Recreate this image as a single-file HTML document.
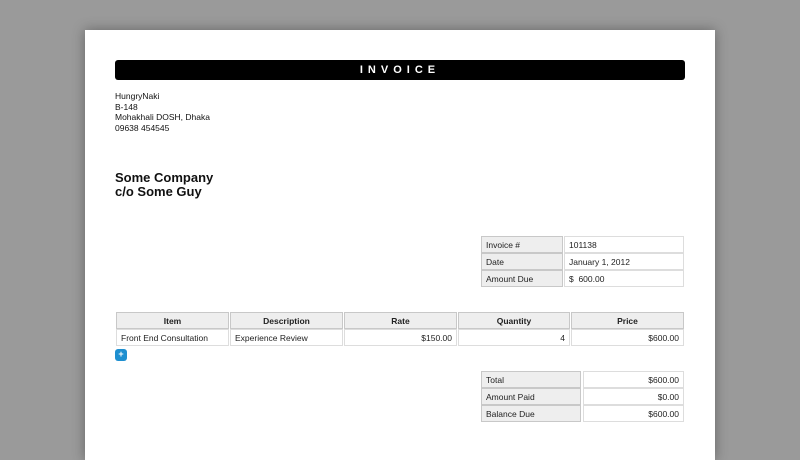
<!DOCTYPE html><html><head><style>
body{margin:0;width:800px;height:450px;background:#9a9a9a;overflow:hidden;font-family:"Liberation Sans",sans-serif;}
.page{position:absolute;left:85px;top:30px;width:630px;height:430px;background:#fff;box-shadow:0 0 12px rgba(0,0,0,.35);}
.bar{position:absolute;left:115px;top:60px;width:570px;height:20px;background:#000;border-radius:3px;color:#fff;font-weight:bold;font-size:11px;letter-spacing:5px;text-align:center;line-height:20px;}
.addr{position:absolute;left:115px;top:91px;font-size:8.5px;line-height:10.5px;color:#111;}
.co{position:absolute;left:115px;top:171px;font-size:13px;font-weight:bold;line-height:13.5px;color:#111;}
.c{position:absolute;box-sizing:border-box;border:1px solid #ddd;font-size:8.5px;padding:0 4px;color:#222;display:flex;align-items:center;}
.g{background:#eee;border-color:#c8c8c8;}
.h{background:#eee;border-color:#c8c8c8;font-weight:bold;justify-content:center;}
.r{justify-content:flex-end;}
.plus{position:absolute;left:115px;top:349px;width:12px;height:12px;border-radius:3px;background:#1e8fd0;color:#fff;font-size:9px;line-height:11px;text-align:center;font-weight:bold;}
</style></head><body>
<div class="page"></div>
<div class="bar">INVOICE</div>
<div class="addr">HungryNaki<br>B-148<br>Mohakhali DOSH, Dhaka<br>09638 454545</div>
<div class="co">Some Company<br>c/o Some Guy</div>

<div class="c g" style="left:481px;top:236px;width:82px;height:17px">Invoice #</div>
<div class="c" style="left:564px;top:236px;width:120px;height:17px">101138</div>
<div class="c g" style="left:481px;top:253px;width:82px;height:17px">Date</div>
<div class="c" style="left:564px;top:253px;width:120px;height:17px">January 1, 2012</div>
<div class="c g" style="left:481px;top:270px;width:82px;height:17px">Amount Due</div>
<div class="c" style="left:564px;top:270px;width:120px;height:17px">$&nbsp; 600.00</div>

<div class="c h" style="left:116px;top:312px;width:113px;height:17px">Item</div>
<div class="c h" style="left:230px;top:312px;width:113px;height:17px">Description</div>
<div class="c h" style="left:344px;top:312px;width:113px;height:17px">Rate</div>
<div class="c h" style="left:458px;top:312px;width:112px;height:17px">Quantity</div>
<div class="c h" style="left:571px;top:312px;width:113px;height:17px">Price</div>
<div class="c" style="left:116px;top:329px;width:113px;height:17px">Front End Consultation</div>
<div class="c" style="left:230px;top:329px;width:113px;height:17px">Experience Review</div>
<div class="c r" style="left:344px;top:329px;width:113px;height:17px">$150.00</div>
<div class="c r" style="left:458px;top:329px;width:112px;height:17px">4</div>
<div class="c r" style="left:571px;top:329px;width:113px;height:17px">$600.00</div>
<div class="plus">+</div>

<div class="c g" style="left:481px;top:371px;width:100px;height:17px">Total</div>
<div class="c r" style="left:583px;top:371px;width:101px;height:17px">$600.00</div>
<div class="c g" style="left:481px;top:388px;width:100px;height:17px">Amount Paid</div>
<div class="c r" style="left:583px;top:388px;width:101px;height:17px">$0.00</div>
<div class="c g" style="left:481px;top:405px;width:100px;height:17px">Balance Due</div>
<div class="c r" style="left:583px;top:405px;width:101px;height:17px">$600.00</div>
</body></html>
